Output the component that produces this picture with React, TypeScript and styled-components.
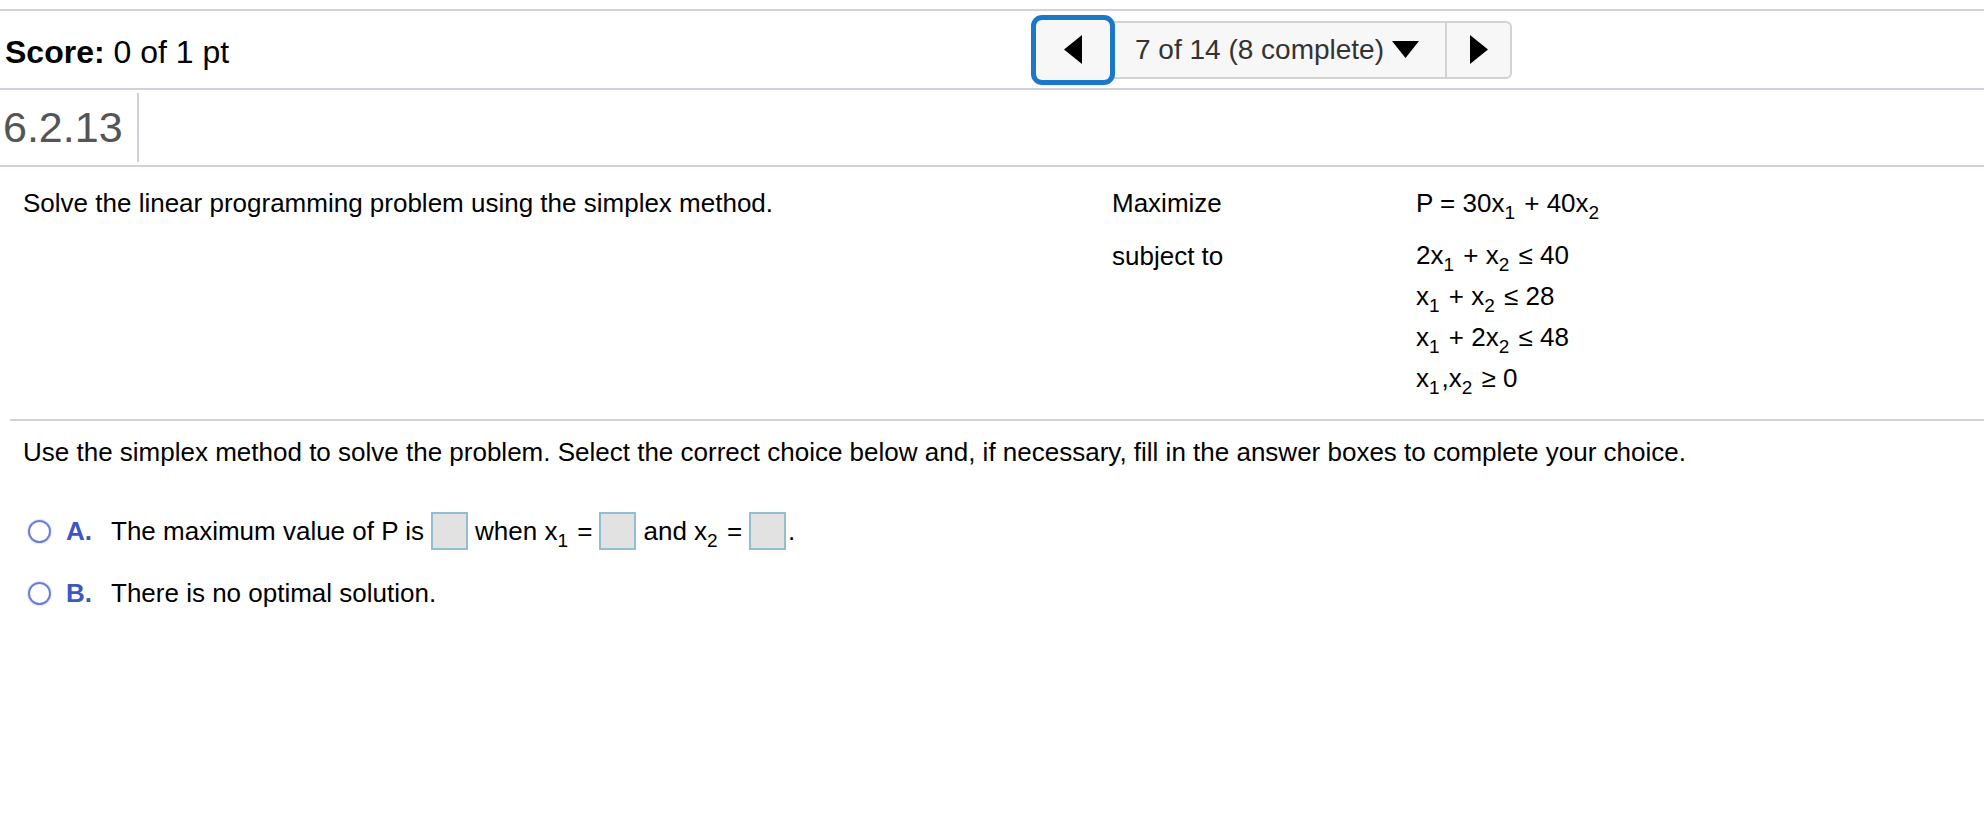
import styled, { createGlobalStyle } from "styled-components";

const GlobalStyle = createGlobalStyle`
  html, body {
    margin: 0;
    padding: 0;
    background: #ffffff;
  }
  body {
    font-family: "Liberation Sans", Arial, Helvetica, sans-serif;
    color: #000;
  }
`;

const LINE = "#cfd2dd";

const Page = styled.div`
  padding-top: 9px;
  width: 1984px;
`;

const TopBar = styled.header`
  display: flex;
  align-items: center;
  height: 77px;
  border-top: 2px solid ${LINE};
  border-bottom: 2px solid ${LINE};
`;

const Score = styled.div`
  width: 1034px;
  padding: 6px 0 0 5px;
  box-sizing: border-box;
  font-size: 32px;
  b {
    font-weight: bold;
  }
`;

const NavGroup = styled.div`
  display: flex;
  height: 58px;
  box-sizing: border-box;
  border: 2px solid #d3d3d3;
  border-radius: 6px;
  background: #f7f7f7;
  color: #333;
`;

const NavButton = styled.div<{ $focused?: boolean; $w: number }>`
  display: flex;
  align-items: center;
  justify-content: center;
  width: ${(p) => p.$w}px;
  box-sizing: border-box;
  border-radius: 6px;
  ${(p) =>
    p.$focused &&
    `
    margin: -3px 0 -3px 0;
    background: #f7f7f7;
    box-shadow: 0 0 0 5px #1b78c9;
    position: relative;
  `}
`;

const Divider = styled.div`
  width: 2px;
  background: #d3d3d3;
`;

const Picker = styled.div`
  display: flex;
  align-items: center;
  gap: 8px;
  padding: 0 26px 0 25px;
  font-size: 28px;
`;

const NumberRow = styled.div`
  display: flex;
  height: 77px;
  padding: 3px 0;
  box-sizing: border-box;
  border-bottom: 2px solid ${LINE};
`;

const QNumber = styled.div`
  display: flex;
  align-items: center;
  padding: 0 14px 0 3px;
  border-right: 2px solid ${LINE};
  font-size: 43px;
  color: #555;
`;

const Problem = styled.section`
  display: flex;
  padding: 15px 0 20px 23px;
  font-size: 26px;
  line-height: 42px;
`;

const Statement = styled.div`
  width: 1089px;
`;

const LpGrid = styled.div`
  display: grid;
  grid-template-columns: 304px auto;
  row-gap: 11px;
`;

const Constraints = styled.div`
  line-height: 41px;
`;

const Sub = styled.sub`
  font-size: 19px;
  vertical-align: -7px;
  line-height: 0;
  margin-right: 2px;
`;

const Rule = styled.hr`
  margin: 0 0 0 10px;
  border: none;
  border-top: 2px solid ${LINE};
`;

const Instructions = styled.p`
  margin: 0;
  padding: 10px 0 0 23px;
  font-size: 26px;
  line-height: 42px;
`;

const Options = styled.div`
  display: flex;
  flex-direction: column;
  gap: 20px;
  padding: 37px 0 0 28px;
`;

const Option = styled.label`
  display: flex;
  align-items: center;
  height: 42px;
  font-size: 26px;
  white-space: pre;
`;

const Radio = styled.span`
  width: 23px;
  height: 23px;
  box-sizing: border-box;
  border-radius: 50%;
  border: 2px solid #6a80d6;
  box-shadow: 0 0 2px rgba(106, 128, 214, 0.6);
  margin-right: 15px;
`;

const Letter = styled.span`
  width: 45px;
  font-weight: bold;
  color: #3b57c4;
`;

const AnswerBox = styled.span<{ $last?: boolean }>`
  display: inline-block;
  width: 37px;
  height: 38px;
  box-sizing: border-box;
  border: 2px solid #91bfcf;
  background: #e2e2e2;
  margin: 0 ${(p) => (p.$last ? 2 : 7)}px 0 7px;
`;

const Arrow = ({ dir }: { dir: "left" | "right" }) => (
  <svg width="18" height="29" viewBox="0 0 18 29">
    {dir === "left" ? (
      <polygon points="18,0 18,29 0,14.5" fill="#000" />
    ) : (
      <polygon points="0,0 0,29 18,14.5" fill="#000" />
    )}
  </svg>
);

const Caret = () => (
  <svg width="27" height="17" viewBox="0 0 27 17">
    <polygon points="0,0 27,0 13.5,17" fill="#000" />
  </svg>
);

const X = ({ n }: { n: number }) => (
  <>
    x<Sub>{n}</Sub>
  </>
);

export default function App() {
  return (
    <Page>
      <GlobalStyle />
      <TopBar>
        <Score>
          <b>Score:</b> 0 of 1 pt
        </Score>
        <NavGroup>
          <NavButton $focused $w={74}>
            <Arrow dir="left" />
          </NavButton>
          <Picker>
            <span>7 of 14 (8 complete)</span>
            <Caret />
          </Picker>
          <Divider />
          <NavButton $w={63}>
            <Arrow dir="right" />
          </NavButton>
        </NavGroup>
      </TopBar>

      <NumberRow>
        <QNumber>6.2.13</QNumber>
      </NumberRow>

      <Problem>
        <Statement>Solve the linear programming problem using the simplex method.</Statement>
        <LpGrid>
          <div>Maximize</div>
          <div>
            P = 30<X n={1} /> + 40<X n={2} />
          </div>
          <div>subject to</div>
          <Constraints>
            <div>
              2<X n={1} /> + <X n={2} /> ≤ 40
            </div>
            <div>
              <X n={1} /> + <X n={2} /> ≤ 28
            </div>
            <div>
              <X n={1} /> + 2<X n={2} /> ≤ 48
            </div>
            <div>
              x<Sub>1</Sub>,x<Sub>2</Sub> ≥ 0
            </div>
          </Constraints>
        </LpGrid>
      </Problem>

      <Rule />

      <Instructions>
        Use the simplex method to solve the problem. Select the correct choice below and, if
        necessary, fill in the answer boxes to complete your choice.
      </Instructions>

      <Options>
        <Option>
          <Radio />
          <Letter>A.</Letter>
          <span>The maximum value of P is</span>
          <AnswerBox />
          <span>
            when x<Sub>1</Sub> =
          </span>
          <AnswerBox />
          <span>
            and x<Sub>2</Sub> =
          </span>
          <AnswerBox $last />
          <span>.</span>
        </Option>
        <Option>
          <Radio />
          <Letter>B.</Letter>
          <span>There is no optimal solution.</span>
        </Option>
      </Options>
    </Page>
  );
}
